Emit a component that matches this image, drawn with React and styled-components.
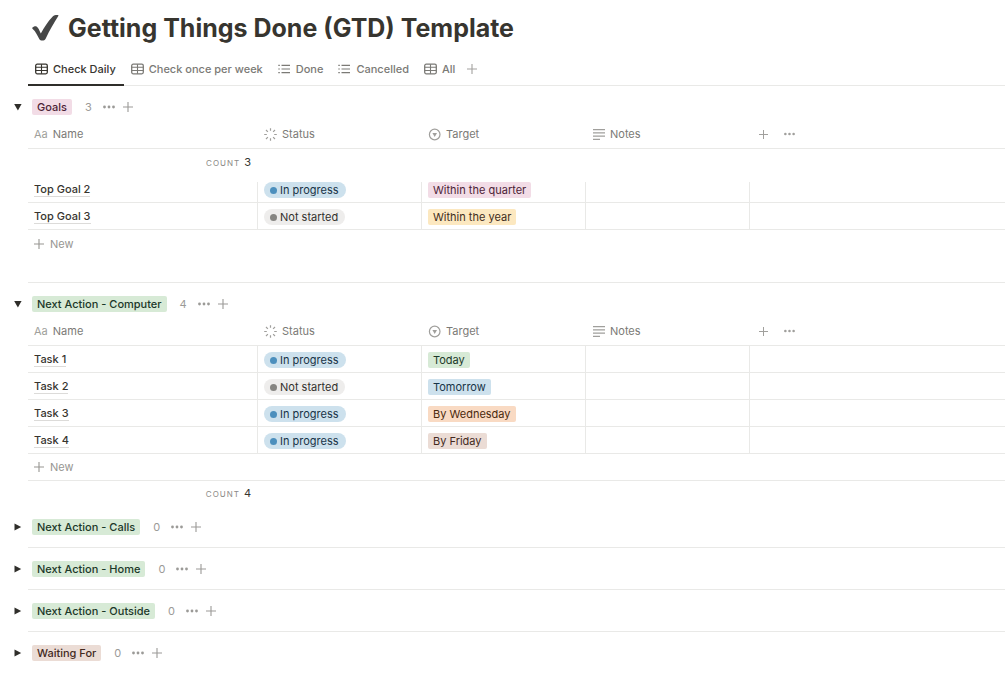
import React, { useState } from "react";
import styled, { createGlobalStyle, css } from "styled-components";

const GlobalStyle = createGlobalStyle`
  * {
    box-sizing: border-box;
  }
  body {
    margin: 0;
    background: #fff;
    color: #37352f;
    font-family: Inter, "Liberation Sans", sans-serif;
    font-size: 11px;
    line-height: 16px;
  }
  button {
    padding: 0;
    border: 0;
    background: none;
    color: inherit;
    font: inherit;
    cursor: pointer;
  }
`;

const palette = {
  pink: ["#f2dce6", "#4c2337"],
  green: ["#d7ead6", "#1c3829"],
  blue: ["#cde1ed", "#183347"],
  gray: ["#eeedec", "#32302c"],
  yellow: ["#fce8c0", "#402c1b"],
  orange: ["#f9dac3", "#49290e"],
  brown: ["#ebdcd5", "#442a1e"],
};

const Page = styled.main`
  padding-left: 10px;
`;

const Header = styled.header`
  margin-left: 18px;
`;

const Title = styled.h1`
  display: flex;
  align-items: center;
  gap: 9px;
  height: 54px;
  margin: 0;
  padding: 2px 0 0 4px;
  font-size: 25px;
  line-height: 34px;
  font-weight: 700;
`;

const Tabs = styled.nav`
  display: flex;
  height: 32px;
  border-bottom: 1px solid #e9e9e7;
`;

const Tab = styled.button`
  display: flex;
  align-items: center;
  gap: 5px;
  height: 32px;
  padding: 0 8px 2px 7px;
  color: #7b7a76;
  font-weight: 500;
  white-space: nowrap;
  ${(p) =>
    p.$active &&
    css`
      padding-bottom: 0;
      border-bottom: 2px solid #2f2e2a;
      color: #37352f;
    `}
`;

const AddTab = styled(Tab)`
  padding-left: 4px;
  color: #a3a29f;
`;

const Section = styled.section`
  display: grid;
  grid-template-columns: 18px minmax(0, 1fr);
`;

const Toggle = styled.button`
  display: flex;
  align-items: center;
  align-self: start;
  height: 16px;
  margin-top: 13px;
  padding-left: 4px;
`;

const SectionBody = styled.div`
  border-bottom: ${(p) => (p.$line ? "1px solid #e9e9e7" : "0")};
  padding-bottom: ${(p) => (p.$roomy ? "25px" : "0")};
`;

const GroupHead = styled.div`
  display: flex;
  align-items: center;
  padding: 13px 0 ${(p) => (p.$open ? "5px" : "12px")} 4px;
`;

const GroupCount = styled.span`
  margin: 0 11px 0 13px;
  color: #9b9a97;
`;

const IconButton = styled.button`
  display: flex;
  margin-right: 8px;
  color: #9b9a97;
`;

const Tag = styled.span`
  display: inline-block;
  height: 16px;
  padding: 0 5px;
  border-radius: 2px;
  background: ${(p) => palette[p.$color][0]};
  color: ${(p) => palette[p.$color][1]};
  font-weight: ${(p) => (p.$strong ? 500 : 400)};
  white-space: nowrap;
`;

const Pill = styled(Tag)`
  display: inline-flex;
  align-items: center;
  gap: 3px;
  padding: 0 7px 0 6px;
  border-radius: 8px;
`;

const Dot = styled.span`
  width: 7px;
  height: 7px;
  border-radius: 50%;
  background: ${(p) => p.$fill};
`;

const Table = styled.table`
  width: 100%;
  table-layout: fixed;
  border-spacing: 0;
`;

const NameCol = styled.col`
  width: 230px;
`;

const PropertyCol = styled.col`
  width: 164px;
`;

const HeadCell = styled.th`
  height: 29px;
  padding: 0 6px;
  border-bottom: 1px solid #e9e9e7;
  color: #7b7a76;
  font-weight: 400;
  text-align: left;
`;

const HeadLabel = styled.div`
  display: flex;
  align-items: center;
  gap: 5px;
  svg {
    color: #a09f9c;
  }
`;

const TypeName = styled.span`
  color: #a09f9c;
`;

const HeadTools = styled(HeadLabel)`
  gap: 16px;
  padding-left: 3px;
  button {
    display: flex;
  }
`;

const Cell = styled.td`
  padding: 0;
  border-bottom: 1px solid #e9e9e7;
  border-right: ${(p) => (p.$last ? "0" : "1px solid #e9e9e7")};
`;

const CellView = styled.div`
  display: flex;
  align-items: flex-end;
  height: ${(p) => (p.$cut ? "20px" : "26px")};
  overflow: hidden;
`;

const CellInner = styled.div`
  display: flex;
  flex: none;
  align-items: center;
  height: 26px;
  padding: ${(p) => (p.$chip ? "2px 0 0 6px" : "0 0 0 6px")};
`;

const NameLink = styled.a`
  border-bottom: 1px solid #dcdbd9;
  color: #37352f;
  font-weight: 500;
  line-height: 14px;
  text-decoration: none;
`;

const NewCell = styled.td`
  height: 27px;
  padding: 0 6px;
  border-bottom: ${(p) => (p.$line ? "1px solid #e9e9e7" : "0")};
`;

const NewButton = styled.button`
  display: flex;
  align-items: center;
  gap: 6px;
  color: #979692;
`;

const CountCell = styled.td`
  height: ${(p) => (p.$sticky ? "33px" : "25px")};
  padding: ${(p) => (p.$sticky ? "0 7px 7px" : "0 7px")};
  text-align: right;
`;

const CountLabel = styled.span`
  margin-right: 4px;
  color: #8b8a86;
  font-size: 8px;
  letter-spacing: 1px;
  text-transform: uppercase;
`;

const CheckMark = () => (
  <svg width="27" height="28" viewBox="0 0 27 28" aria-hidden="true">
    <path
      d="M.3 13.800C1 12.800 3.200 12 4.500 12.500 6.100 13.200 7.400 16.300 8.800 19.600 12.300 13.500 16.600 6.600 20.700 2.600 22 1.300 24.200.9 26 1.100c.5.1.6.5.3 1C22 8.900 17.500 16.800 14 23.900c-.7 1.500-1.300 2.200-2.700 2.500-1.400.2-3.200.2-3.900-1.100C5.500 21.600 3.600 17.400.7 15c-.5-.4-.7-.8-.4-1.200z"
      fill="#464747"
    />
  </svg>
);

const TableIcon = () => (
  <svg width="13" height="12" viewBox="0 0 13 12" fill="none" stroke="currentColor" aria-hidden="true">
    <rect x=".7" y="1.200" width="11.600" height="9.600" rx="1.500" strokeWidth="1.300" />
    <path d="M.7 4.300h11.600M.7 7.500h11.600M6.500 1.200v9.600" strokeWidth="1.100" />
  </svg>
);

const ListIcon = () => (
  <svg width="13" height="12" viewBox="0 0 13 12" stroke="currentColor" strokeWidth="1.200" aria-hidden="true">
    <path d="M3.500 2.300h8.500M3.500 6h8.500M3.500 9.700h8.500M.3 2.300h1.500M.3 6h1.500M.3 9.700h1.500" />
  </svg>
);

const PlusIcon = ({ size = 10 }) => (
  <svg width={size} height={size} viewBox="0 0 10 10" stroke="currentColor" strokeWidth="1.100" aria-hidden="true">
    <path d="M5 0v10M0 5h10" />
  </svg>
);

const DotsIcon = ({ size = 12 }) => (
  <svg width={size} height="4" viewBox="0 0 12 4" fill="currentColor" aria-hidden="true">
    <circle cx="1.500" cy="2" r="1.400" />
    <circle cx="6" cy="2" r="1.400" />
    <circle cx="10.500" cy="2" r="1.400" />
  </svg>
);

const TriangleIcon = ({ open }) => (
  <svg width="8" height="8" viewBox="0 0 8 8" fill="#2f2e2a" aria-hidden="true">
    <path d={open ? "M.2 1h7.400L3.900 7.500z" : "M.5.6v7L7.200 4.100z"} />
  </svg>
);

const StatusIcon = () => (
  <svg width="13" height="13" viewBox="0 0 13 13" stroke="currentColor" strokeWidth="1.200" aria-hidden="true">
    <path d="M6.500.2v2.600M6.500 10.200v2.600M.2 6.500h2.600M10.200 6.500h2.600M2 2l1.900 1.900M9.100 9.100l1.900 1.900M2 11l1.900-1.900M9.100 3.900l1.900-1.900" />
  </svg>
);

const SelectIcon = () => (
  <svg width="13" height="13" viewBox="-1 0 13 13" aria-hidden="true">
    <circle cx="5.700" cy="6.500" r="5.300" fill="none" stroke="currentColor" strokeWidth="1.200" />
    <path d="M3.400 4.900H8L5.700 8.900z" fill="currentColor" />
  </svg>
);

const TextIcon = () => (
  <svg width="13" height="13" viewBox="0 0 13 13" stroke="currentColor" strokeWidth="1.200" aria-hidden="true">
    <path d="M1 1.700h12M1 4.900h12M1 8.100h12M1 11.300h7" />
  </svg>
);

const tabs = [
  { label: "Check Daily", Icon: TableIcon },
  { label: "Check once per week", Icon: TableIcon },
  { label: "Done", Icon: ListIcon },
  { label: "Cancelled", Icon: ListIcon },
  { label: "All", Icon: TableIcon },
];

const statuses = {
  "In progress": { color: "blue", dot: "#4c8fbd" },
  "Not started": { color: "gray", dot: "#868582" },
};

const groups = [
  {
    name: "Goals",
    color: "pink",
    count: 3,
    countOnTop: true,
    rows: [
      { name: "Top Goal 2", status: "In progress", target: "Within the quarter", color: "pink" },
      { name: "Top Goal 3", status: "Not started", target: "Within the year", color: "yellow" },
    ],
  },
  {
    name: "Next Action - Computer",
    color: "green",
    count: 4,
    rows: [
      { name: "Task 1", status: "In progress", target: "Today", color: "green" },
      { name: "Task 2", status: "Not started", target: "Tomorrow", color: "blue" },
      { name: "Task 3", status: "In progress", target: "By Wednesday", color: "orange" },
      { name: "Task 4", status: "In progress", target: "By Friday", color: "brown" },
    ],
  },
  { name: "Next Action - Calls", color: "green", count: 0, rows: [] },
  { name: "Next Action - Home", color: "green", count: 0, rows: [] },
  { name: "Next Action - Outside", color: "green", count: 0, rows: [] },
  { name: "Waiting For", color: "brown", count: 0, rows: [] },
];

const CountRow = ({ count, sticky }) => (
  <tr>
    <CountCell $sticky={sticky}>
      <CountLabel>Count</CountLabel>
      {count}
    </CountCell>
  </tr>
);

const TaskRow = ({ row, cut }) => {
  const status = statuses[row.status];
  const cells = [
    <NameLink href="#">{row.name}</NameLink>,
    <Pill $color={status.color}>
      <Dot $fill={status.dot} />
      {row.status}
    </Pill>,
    <Tag $color={row.color}>{row.target}</Tag>,
    null,
    null,
  ];

  return (
    <tr>
      {cells.map((cell, index) => (
        <Cell key={index} $last={index === cells.length - 1}>
          <CellView $cut={cut}>
            <CellInner $chip={index > 0}>{cell}</CellInner>
          </CellView>
        </Cell>
      ))}
    </tr>
  );
};

const TaskTable = ({ group }) => (
  <Table>
    <colgroup>
      <NameCol />
      <PropertyCol />
      <PropertyCol />
      <PropertyCol />
      <col />
    </colgroup>
    <thead>
      <tr>
        <HeadCell>
          <HeadLabel>
            <TypeName>Aa</TypeName>Name
          </HeadLabel>
        </HeadCell>
        <HeadCell>
          <HeadLabel>
            <StatusIcon />
            Status
          </HeadLabel>
        </HeadCell>
        <HeadCell>
          <HeadLabel>
            <SelectIcon />
            Target
          </HeadLabel>
        </HeadCell>
        <HeadCell>
          <HeadLabel>
            <TextIcon />
            Notes
          </HeadLabel>
        </HeadCell>
        <HeadCell>
          <HeadTools>
            <button aria-label="Add property">
              <PlusIcon size={9} />
            </button>
            <button aria-label="Table options">
              <DotsIcon size={11} />
            </button>
          </HeadTools>
        </HeadCell>
      </tr>
    </thead>
    <tbody>
      {group.countOnTop && <CountRow count={group.count} sticky />}
      {group.rows.map((row, index) => (
        <TaskRow key={row.name} row={row} cut={group.countOnTop && index === 0} />
      ))}
      <tr>
        <NewCell colSpan={5} $line={!group.countOnTop}>
          <NewButton>
            <PlusIcon />
            New
          </NewButton>
        </NewCell>
      </tr>
      {!group.countOnTop && <CountRow count={group.count} />}
    </tbody>
  </Table>
);

const Group = ({ group, last }) => {
  const [open, setOpen] = useState(group.rows.length > 0);

  return (
    <Section>
      <Toggle aria-label={group.name} aria-expanded={open} onClick={() => setOpen(!open)}>
        <TriangleIcon open={open} />
      </Toggle>
      <SectionBody $line={!last && (!open || group.countOnTop)} $roomy={open && group.countOnTop}>
        <GroupHead $open={open}>
          <Tag $color={group.color} $strong>
            {group.name}
          </Tag>
          <GroupCount>{group.count}</GroupCount>
          <IconButton aria-label="Group options">
            <DotsIcon />
          </IconButton>
          <IconButton aria-label="Add item">
            <PlusIcon />
          </IconButton>
        </GroupHead>
        {open && <TaskTable group={group} />}
      </SectionBody>
    </Section>
  );
};

const App = () => {
  const [activeTab, setActiveTab] = useState("Check Daily");

  return (
    <Page>
      <GlobalStyle />
      <Header>
        <Title>
          <CheckMark />
          Getting Things Done (GTD) Template
        </Title>
        <Tabs>
          {tabs.map(({ label, Icon }) => (
            <Tab key={label} $active={label === activeTab} onClick={() => setActiveTab(label)}>
              <Icon />
              {label}
            </Tab>
          ))}
          <AddTab aria-label="Add view">
            <PlusIcon />
          </AddTab>
        </Tabs>
      </Header>
      {groups.map((group, index) => (
        <Group key={group.name} group={group} last={index === groups.length - 1} />
      ))}
    </Page>
  );
};

export default App;
